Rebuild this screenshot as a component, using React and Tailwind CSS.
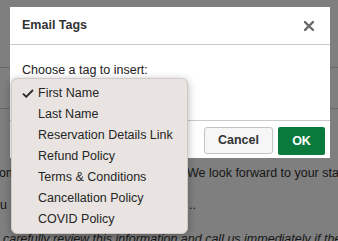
import React from 'react';

const tags = [
  'First Name',
  'Last Name',
  'Reservation Details Link',
  'Refund Policy',
  'Terms & Conditions',
  'Cancellation Policy',
  'COVID Policy',
];

const App = () => {
  return (
    <div className="relative w-[338px] h-[241px] overflow-hidden bg-[#7f7f7f] font-['Liberation_Sans',Arial,sans-serif] text-[#161616]">
      {/* Page behind the backdrop */}
      <div className="h-[67px]" />
      <div className="h-[41px] border-t border-[#676767]" />
      <div className="h-[53px] border-t border-[#676767]" />
      <div className="flex text-[12.5px] leading-[24px] whitespace-nowrap">
        <span className="w-[188px] shrink-0 overflow-hidden -ml-[1px]">om</span>
        <span>We look forward to your stay with us.</span>
      </div>
      <div className="flex text-[12.5px] leading-[20px] mt-[10px] whitespace-nowrap">
        <span className="w-[189px] shrink-0 overflow-hidden">u</span>
        <span>..</span>
      </div>
      <div className="text-[12.5px] leading-[20px] mt-[14px] pl-[3px] italic whitespace-nowrap">
        carefully review this information and call us immediately if there are any changes
      </div>

      {/* Modal */}
      <div className="absolute left-[10px] top-[7px] w-[320px] h-[151px] bg-white flex flex-col">
        <div className="h-[38px] flex items-center justify-between pl-[12px] pr-[16px] border-b border-[#c9c9c9]">
          <h2 className="text-[12.5px] font-bold text-[#333]">Email Tags</h2>
          <svg width="10" height="10" viewBox="0 0 10 10" className="mt-[1px]">
            <path d="M1 1L9 9M9 1L1 9" stroke="#6b6b6b" strokeWidth="2.4" strokeLinecap="square" />
          </svg>
        </div>
        <div className="h-[75px] pt-[17px] pl-[12px] text-[12.5px] leading-[16px] text-[#222]">
          Choose a tag to insert:
        </div>
        <div className="flex-1 border-t border-[#c9c9c9] flex items-start justify-end gap-[5px] pt-[6px] pr-[5px]">
          <button className="w-[69px] h-[27px] rounded-[3px] border border-[#c4c4c4] bg-[#f6f6f6] text-[12.5px] font-bold text-[#333]">
            Cancel
          </button>
          <button className="w-[47px] h-[28px] rounded-[2px] bg-[#0a7a3c] text-[12.5px] font-bold text-white">
            OK
          </button>
        </div>
      </div>

      {/* Native select popup */}
      <div className="absolute left-[11px] top-[78px] w-[177px] h-[156px] rounded-[6px] bg-[#e9e4e1] border border-[#cfcac7] shadow-[0_2px_8px_rgba(0,0,0,0.3)] py-[4px]">
        {tags.map((tag, i) => (
          <div key={tag} className="h-[21px] flex items-center text-[12.5px] text-[#262626]">
            <span className="w-[25px] flex justify-end pr-[3px]">
              {i === 0 && (
                <svg width="12" height="9" viewBox="0 0 12 9">
                  <path d="M1 4.6L4.2 7.8L11 1" fill="none" stroke="#262626" strokeWidth="1.8" />
                </svg>
              )}
            </span>
            <span className="pl-[1px]">{tag}</span>
          </div>
        ))}
      </div>
    </div>
  );
};

export default App;
